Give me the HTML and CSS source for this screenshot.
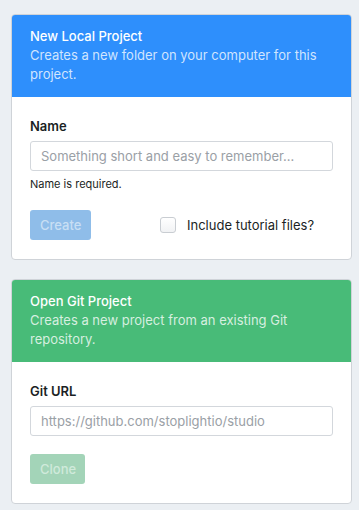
FILE: index.html
```html
<!DOCTYPE html>
<html>
<head>
<meta charset="utf-8">
<link rel="stylesheet" href="styles.css">
</head>
<body>
<div class="page">
  <section class="card">
    <header class="card-head head-blue">
      <div class="title">New Local Project</div>
      <div class="sub">Creates a new folder on your computer for this project.</div>
    </header>
    <div class="card-body">
      <label class="label">Name</label>
      <input class="input" type="text" placeholder="Something short and easy to remember...">
      <div class="help">Name is required.</div>
      <div class="actions">
        <button class="btn btn-blue" disabled>Create</button>
        <label class="check"><span class="box"></span><span>Include tutorial files?</span></label>
      </div>
    </div>
  </section>
  <section class="card">
    <header class="card-head head-green">
      <div class="title">Open Git Project</div>
      <div class="sub">Creates a new project from an existing Git repository.</div>
    </header>
    <div class="card-body">
      <label class="label">Git URL</label>
      <input class="input" type="text" placeholder="https://github.com/stoplightio/studio">
      <div class="actions actions-git">
        <button class="btn btn-green" disabled>Clone</button>
      </div>
    </div>
  </section>
</div>
</body>
</html>
```
FILE: styles.css
```css
html, body {
  margin: 0;
  padding: 0;
  background: #ebeff3;
}
body {
  font-family: Inter, "Open Sans", "Liberation Sans", sans-serif;
  font-size: 13px;
  color: #1b1f24;
}
.page {
  padding: 14px 7px 0 11px;
  display: flex;
  flex-direction: column;
  gap: 19px;
}
.card {
  width: 341px;
  box-sizing: border-box;
  background: #fff;
  border: 1px solid #cfd3d8;
  border-radius: 4px;
  overflow: hidden;
}
.card-head {
  margin: -1px -1px 0 -1px;
  padding: 13px 19px 13px 19px;
  color: #fff;
  line-height: 19px;
}
.head-blue { background: #2e8ffc; }
.head-green { background: #48bb78; }
.title { font-size: 13px; font-weight: 500; }
.sub { font-size: 13px; color: rgba(255,255,255,0.78); }
.card-body {
  padding: 20px 18px 19px 18px;
  display: flex;
  flex-direction: column;
}
.label {
  font-weight: 600;
  line-height: 19px;
  margin-bottom: 5px;
}
.input {
  box-sizing: border-box;
  height: 30px;
  width: 100%;
  border: 1px solid #d3d7dc;
  border-radius: 3px;
  padding: 0 10px;
  font-family: inherit;
  font-size: 13px;
  color: #1b1f24;
  outline: none;
}
.input::placeholder { color: #9aa0a6; }
.help {
  font-size: 11px;
  line-height: 14px;
  margin-top: 6px;
}
.actions {
  margin-top: 19px;
  display: flex;
  align-items: center;
}
.actions-git { margin-top: 18px; }
.btn {
  height: 30px;
  border: 0;
  border-radius: 3px;
  padding: 0 10px;
  font-family: inherit;
  font-size: 13px;
  font-weight: 500;
}
.btn-blue { background: #8fbde9; color: #c8dff4; width: 61px; }
.btn-green { background: #a3d4b8; color: #d0eadb; width: 55px; }
.check {
  margin-left: 69px;
  display: flex;
  align-items: center;
  gap: 11px;
}
.box {
  width: 14px;
  height: 14px;
  border: 1px solid #c9cdd2;
  border-radius: 3px;
  background: linear-gradient(#ffffff, #f1f2f4);
}
```
